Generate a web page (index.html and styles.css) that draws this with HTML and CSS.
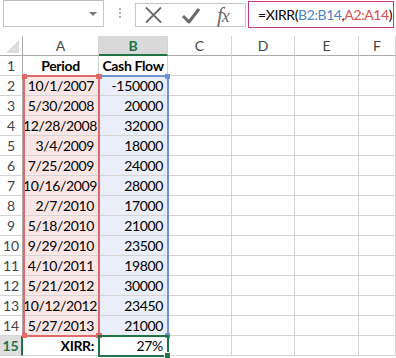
FILE: index.html
```html
<!DOCTYPE html>
<html>
<head>
<meta charset="utf-8">
<link rel="stylesheet" href="styles.css">
</head>
<body>
<div class="toolbar">
  <div class="namebox"><span class="arrow"></span></div>
  <div class="dots"><i></i><i></i><i></i></div>
  <div class="fbtns">
    <svg class="ico" width="110" height="23" viewBox="0 0 110 23">
      <path d="M10 3.5 L25 18.5 M25 3.5 L10 18.5" stroke="#6a6a6a" stroke-width="1.8" fill="none"/>
      <path d="M47 12 L53 18 L63 5" stroke="#6a6a6a" stroke-width="3" fill="none" stroke-linejoin="round"/>
    </svg>
    <span class="fx">f<span class="fxx">x</span></span>
  </div>
  <div class="formula">=XIRR(<span class="rb">B2:B14</span>,<span class="ra">A2:A14</span>)</div>
</div>
<div class="sheet">
  <div class="h corner"><svg width="23" height="20" viewBox="0 0 23 20"><polygon points="19,4 19,17 6,17" fill="#dcdcdc"/></svg></div>
  <div class="h col">A</div><div class="h col selcol">B</div><div class="h col">C</div><div class="h col">D</div><div class="h col">E</div><div class="h col">F</div>

  <div class="h row">1</div><div class="c b ctr">Period</div><div class="c b ctr">Cash Flow</div><div class="c"></div><div class="c"></div><div class="c"></div><div class="c"></div>
  <div class="h row">2</div><div class="c pa">10/1/2007</div><div class="c pb">-150000</div><div class="c"></div><div class="c"></div><div class="c"></div><div class="c"></div>
  <div class="h row">3</div><div class="c pa">5/30/2008</div><div class="c pb">20000</div><div class="c"></div><div class="c"></div><div class="c"></div><div class="c"></div>
  <div class="h row">4</div><div class="c pa">12/28/2008</div><div class="c pb">32000</div><div class="c"></div><div class="c"></div><div class="c"></div><div class="c"></div>
  <div class="h row">5</div><div class="c pa">3/4/2009</div><div class="c pb">18000</div><div class="c"></div><div class="c"></div><div class="c"></div><div class="c"></div>
  <div class="h row">6</div><div class="c pa">7/25/2009</div><div class="c pb">24000</div><div class="c"></div><div class="c"></div><div class="c"></div><div class="c"></div>
  <div class="h row">7</div><div class="c pa">10/16/2009</div><div class="c pb">28000</div><div class="c"></div><div class="c"></div><div class="c"></div><div class="c"></div>
  <div class="h row">8</div><div class="c pa">2/7/2010</div><div class="c pb">17000</div><div class="c"></div><div class="c"></div><div class="c"></div><div class="c"></div>
  <div class="h row">9</div><div class="c pa">5/18/2010</div><div class="c pb">21000</div><div class="c"></div><div class="c"></div><div class="c"></div><div class="c"></div>
  <div class="h row">10</div><div class="c pa">9/29/2010</div><div class="c pb">23500</div><div class="c"></div><div class="c"></div><div class="c"></div><div class="c"></div>
  <div class="h row">11</div><div class="c pa">4/10/2011</div><div class="c pb">19800</div><div class="c"></div><div class="c"></div><div class="c"></div><div class="c"></div>
  <div class="h row">12</div><div class="c pa">5/21/2012</div><div class="c pb">30000</div><div class="c"></div><div class="c"></div><div class="c"></div><div class="c"></div>
  <div class="h row">13</div><div class="c pa">10/12/2012</div><div class="c pb">23450</div><div class="c"></div><div class="c"></div><div class="c"></div><div class="c"></div>
  <div class="h row">14</div><div class="c pa">5/27/2013</div><div class="c pb">21000</div><div class="c"></div><div class="c"></div><div class="c"></div><div class="c"></div>
  <div class="h row selrow">15</div><div class="c b">XIRR:</div><div class="c">27%</div><div class="c"></div><div class="c"></div><div class="c"></div><div class="c"></div>

  <div class="rng rng-b"><i class="hd tl"></i><i class="hd tr"></i><i class="hd bl"></i><i class="hd br"></i></div>
  <div class="rng rng-a"><i class="hd tl"></i><i class="hd tr"></i><i class="hd bl"></i><i class="hd br"></i></div>
  <div class="sel"><i class="fill"></i></div>
</div>
</body>
</html>
```
FILE: styles.css
```css
html, body {
  margin: 0;
  padding: 0;
  background: #fff;
  overflow: hidden;
}
body {
  font-family: Lato, "Liberation Sans", sans-serif;
  font-size: 14px;
  letter-spacing: -0.35px;
  color: #000;
  width: 396px;
  height: 358px;
}
.toolbar {
  display: flex;
  align-items: flex-start;
  height: 36px;
  box-sizing: border-box;
  position: relative;
}
.namebox {
  margin-left: 3px;
  width: 101px;
  height: 27px;
  box-sizing: border-box;
  border: 1px solid #c6c6c6;
  border-top-color: #bdbdbd;
  display: flex;
  align-items: center;
  justify-content: flex-end;
  padding-right: 6px;
}
.arrow {
  width: 0;
  height: 0;
  border-left: 4px solid transparent;
  border-right: 4px solid transparent;
  border-top: 4px solid #777;
}
.dots {
  margin-left: 15px;
  margin-top: 8px;
  display: flex;
  flex-direction: column;
  gap: 2px;
}
.dots i {
  display: block;
  width: 2px;
  height: 2px;
  background: #b0b0b0;
}
.fbtns {
  margin-left: 14px;
  margin-top: 3px;
  width: 111px;
  height: 24px;
  box-sizing: border-box;
  border: 1px solid #c6c6c6;
  position: relative;
}
.ico {
  position: absolute;
  left: 0;
  top: 0;
}
.fx {
  position: absolute;
  left: 81px;
  top: -1px;
  font-family: "Liberation Serif", serif;
  font-style: italic;
  font-size: 21px;
  color: #6a6a6a;
  letter-spacing: -1px;
}
.fxx {
  font-size: 18px;
}
.formula {
  margin-left: 2px;
  margin-top: 1px;
  width: 146px;
  height: 27px;
  box-sizing: border-box;
  border: 1px solid #c8387c;
  padding-left: 9px;
  line-height: 25px;
  font-size: 14px;
  letter-spacing: -0.4px;
  white-space: nowrap;
  overflow: hidden;
  color: #000;
}
.rb { color: #4f7fc8; }
.ra { color: #d84e4e; }

.sheet {
  position: relative;
  display: grid;
  grid-template-columns: 23px 76px 69px 64px 63px 64px 37px;
  grid-auto-rows: 20px;
}
.h, .c {
  box-sizing: border-box;
  border-right: 1px solid #d4d4d4;
  border-bottom: 1px solid #d4d4d4;
  line-height: 20px;
  white-space: nowrap;
  overflow: hidden;
}
.h {
  color: #444;
  text-align: center;
  letter-spacing: 0;
}
.col {
  border-bottom-color: #ababab;
}
.corner {
  border-bottom-color: #ababab;
  border-right-color: #ababab;
}
.corner svg { display: block; }
.row {
  border-right-color: #ababab;
}
.selcol {
  background: #d9d9d9;
  color: #217346;
  font-weight: bold;
  border-bottom: 2px solid #217346;
}
.selrow {
  background: #dedede;
  color: #217346;
  font-weight: bold;
  border-right: 2px solid #217346;
}
.c {
  text-align: right;
  padding-right: 4px;
}
.c.ctr {
  text-align: center;
  padding-right: 0;
}
.b { font-weight: bold; }
.pa { background: #fbe6e6; }
.pb { background: #e9eef8; }

.rng {
  position: absolute;
  box-sizing: border-box;
  top: 39px;
  height: 262px;
}
.rng-a {
  left: 23px;
  width: 77px;
  border: 2px solid #e06a6a;
}
.rng-b {
  left: 98px;
  width: 71px;
  border: 2px solid #6d93d2;
}
.hd {
  position: absolute;
  width: 5px;
  height: 5px;
}
.rng-a .hd { background: #e06a6a; }
.rng-b .hd { background: #6d93d2; }
.tl { left: -3px; top: -3px; }
.tr { right: -3px; top: -3px; }
.bl { left: -3px; bottom: -3px; }
.br { right: -3px; bottom: -3px; }
.sel {
  position: absolute;
  box-sizing: border-box;
  left: 98px;
  top: 299px;
  width: 71px;
  height: 22px;
  border: 2px solid #217346;
}
.fill {
  position: absolute;
  right: -4px;
  bottom: -4px;
  width: 5px;
  height: 5px;
  background: #217346;
  border: 1px solid #fff;
}
```
